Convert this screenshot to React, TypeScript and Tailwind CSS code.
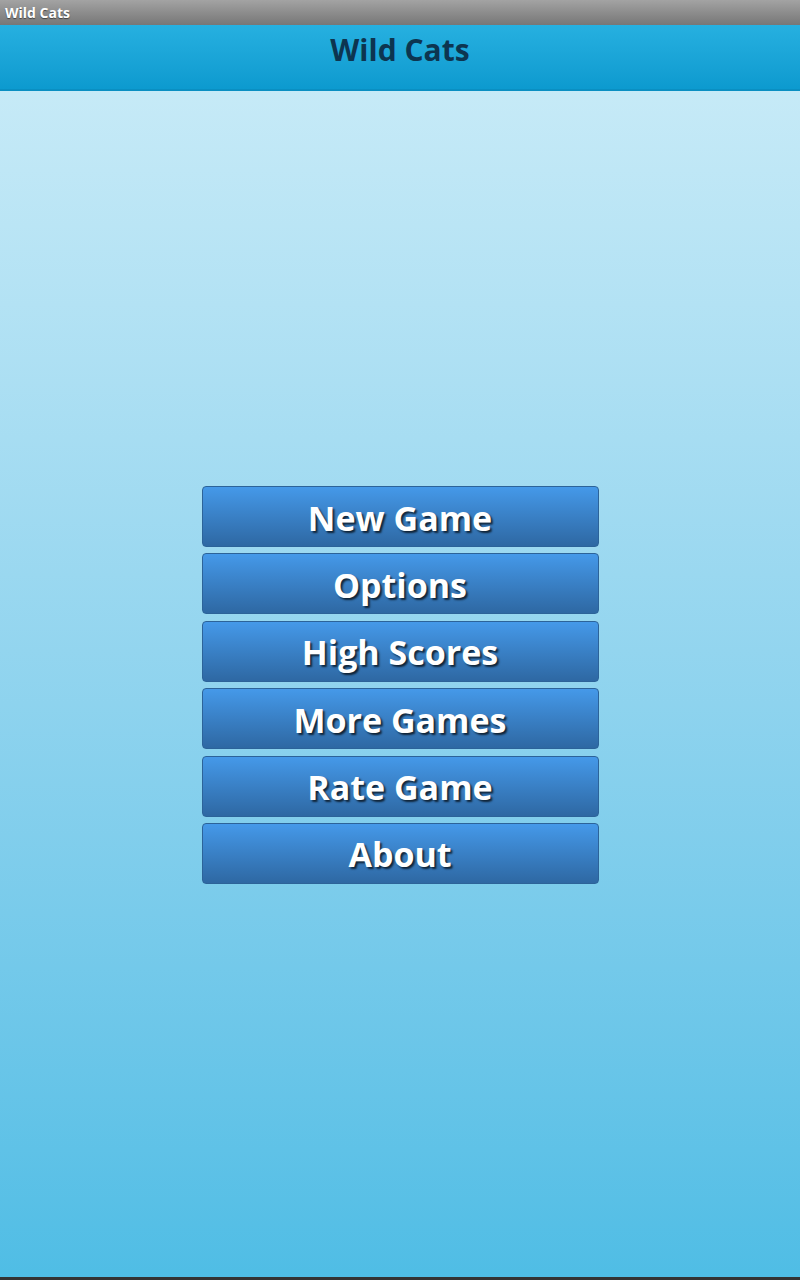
export default function App() {
  const items = ['New Game', 'Options', 'High Scores', 'More Games', 'Rate Game', 'About'];

  return (
    <div
      className="w-[800px] h-[1280px] flex flex-col overflow-hidden"
      style={{ fontFamily: '"Open Sans", "DejaVu Sans", sans-serif' }}
    >
      {/* status title strip */}
      <div className="h-[25px] shrink-0 flex items-center px-[5px] bg-gradient-to-b from-[#a3a3a3] to-[#777777]">
        <span className="text-[14px] font-bold text-white [text-shadow:0_1px_1px_rgba(0,0,0,0.5)]">Wild Cats</span>
      </div>

      {/* action bar */}
      <div className="h-[66px] shrink-0 flex items-start justify-center pt-[4px] bg-gradient-to-b from-[#26b0e0] to-[#0c9acf] border-b-[2px] border-[#0a8fc2]">
        <span className="text-[30px] font-bold text-[#0d3550] leading-[42px]">Wild Cats</span>
      </div>

      {/* menu */}
      <div className="flex-1 flex flex-col items-center justify-center gap-[6.4px] pt-[2px] bg-gradient-to-b from-[#c6eaf7] to-[#4fbde5]">
        {items.map((label) => (
          <button
            key={label}
            className="w-[397px] h-[61px] rounded-[4px] border border-[#2c6399] bg-gradient-to-b from-[#4599e9] to-[#2e68a3] flex items-center justify-center"
          >
            <span className="text-[34px] font-bold text-white leading-none pt-[2px] [text-shadow:2px_2px_2px_rgba(0,0,0,0.7)]">
              {label}
            </span>
          </button>
        ))}
      </div>

      <div className="h-[3px] shrink-0 bg-[#333333]" />
    </div>
  );
}
